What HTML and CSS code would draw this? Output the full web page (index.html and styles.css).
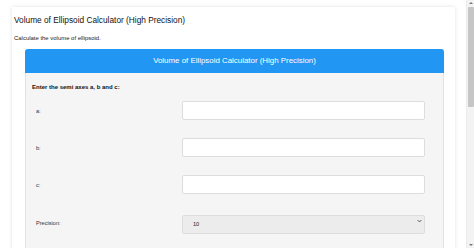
FILE: index.html
```html
<!DOCTYPE html>
<html lang="en">
<head>
    <meta charset="UTF-8">
    <meta name="viewport" content="width=device-width, initial-scale=1.0">
    <title>Volume of Ellipsoid Calculator (High Precision)</title>
    <link rel="stylesheet" href="styles.css">
</head>
<body>
    <div class="page">
        <div class="sheet">
            <h1 class="page-title">Volume of Ellipsoid Calculator (High Precision)</h1>
            <p class="page-desc">Calculate the volume of ellipsoid.</p>

            <div class="calc-card">
                <div class="calc-header">Volume of Ellipsoid Calculator (High Precision)</div>
                <div class="calc-body">
                    <div class="calc-lead">Enter the semi axes a, b and c:</div>

                    <div class="calc-fields">
                        <div class="calc-row">
                            <label class="calc-label" for="axis-a">a:</label>
                            <input class="calc-input" id="axis-a" type="text">
                        </div>
                        <div class="calc-row">
                            <label class="calc-label" for="axis-b">b:</label>
                            <input class="calc-input" id="axis-b" type="text">
                        </div>
                        <div class="calc-row">
                            <label class="calc-label" for="axis-c">c:</label>
                            <input class="calc-input" id="axis-c" type="text">
                        </div>
                        <div class="calc-row">
                            <label class="calc-label" for="precision">Precision:</label>
                            <div class="select-wrap">
                                <select class="calc-select" id="precision">
                                    <option>10</option>
                                </select>
                                <svg class="select-arrow" viewBox="0 0 8 6" fill="none" stroke="#444" stroke-width="1.4">
                                    <polyline points="1 1.5 4 4.5 7 1.5"></polyline>
                                </svg>
                            </div>
                        </div>
                    </div>

                    <button class="calc-button" type="button">Calculate</button>
                    <div class="calc-result">Volume: </div>
                </div>
            </div>
        </div>
    </div>

    <!-- 窗口滚动条 -->
    <div class="scrollbar">
        <span class="scroll-arrow up"></span>
        <span class="scroll-thumb"></span>
        <span class="scroll-arrow down"></span>
    </div>
</body>
</html>
```

FILE: styles.css
```css
* {
    margin: 0;
    padding: 0;
    box-sizing: border-box;
    font-family: "Liberation Sans", Arial, Helvetica, sans-serif;
}

body {
    background: #ffffff;
    color: #222222;
}

.page {
    padding: 7px 19px 20px 12px;
}

.sheet {
    background: #ffffff;
    box-shadow: 0 0 4px rgba(0, 0, 0, 0.12);
    padding: 0 11px 20px 0;
}

.page-title {
    font-size: 8.3px;
    font-weight: normal;
    line-height: 10px;
    padding: 8px 0 0 2px;
    color: #111111;
}

.page-desc {
    font-size: 5.95px;
    line-height: 7px;
    margin-top: 10px;
    padding-left: 2px;
    color: #222222;
}

.calc-card {
    margin: 7px 0 0 13px;
    border: 1px solid #e2e2e2;
    border-radius: 3px;
    background: #f5f5f5;
}

.calc-header {
    background: #2196f3;
    color: #ffffff;
    font-size: 7.9px;
    height: 24px;
    line-height: 24px;
    text-align: center;
    border-radius: 3px 3px 0 0;
    margin: -1px -1px 0;
}

.calc-body {
    padding: 10px 10px 16px;
}

.calc-lead {
    font-size: 6px;
    font-weight: bold;
    line-height: 8px;
    margin-left: -4px;
    color: #111111;
}

.calc-fields {
    display: flex;
    flex-direction: column;
    gap: 18px;
    margin-top: 10px;
}

.calc-row {
    display: grid;
    grid-template-columns: 146px 1fr;
    align-items: center;
    padding-right: 8px;
}

.calc-label {
    font-size: 5.6px;
    color: #333333;
}

.calc-input {
    height: 19px;
    border: 1px solid #dddddd;
    border-radius: 2px;
    background: #ffffff;
    outline: none;
}

.select-wrap {
    position: relative;
}

.calc-select {
    width: 100%;
    height: 19px;
    border: 1px solid #dddddd;
    border-radius: 2px;
    background: #ececec;
    font-size: 5.6px;
    color: #222222;
    padding-left: 10px;
    appearance: none;
    -webkit-appearance: none;
    outline: none;
}

.select-arrow {
    position: absolute;
    right: 3px;
    top: 7px;
    width: 5px;
    height: 4px;
}

.calc-button {
    display: block;
    width: 100%;
    height: 22px;
    margin-top: 15px;
    border: none;
    border-radius: 2px;
    background: #7fb77b;
    color: #ffffff;
    font-size: 7px;
}

.calc-result {
    margin-top: 12px;
    font-size: 6px;
    color: #333333;
}

.scrollbar {
    position: fixed;
    top: 0;
    right: 0;
    width: 8px;
    height: 100%;
    background: #f3f3f3;
    border-left: 1px solid #ececec;
    display: flex;
    flex-direction: column;
    align-items: center;
}

.scroll-arrow {
    width: 0;
    height: 0;
    border-left: 2px solid transparent;
    border-right: 2px solid transparent;
    margin: 2px 0;
}

.scroll-arrow.up {
    border-bottom: 2px solid #777777;
}

.scroll-arrow.down {
    margin-top: auto;
    border-top: 2px solid #777777;
}

.scroll-thumb {
    width: 6px;
    height: 100px;
    margin-top: 1px;
    background: #c6c6c6;
    border-radius: 1px;
}
```
